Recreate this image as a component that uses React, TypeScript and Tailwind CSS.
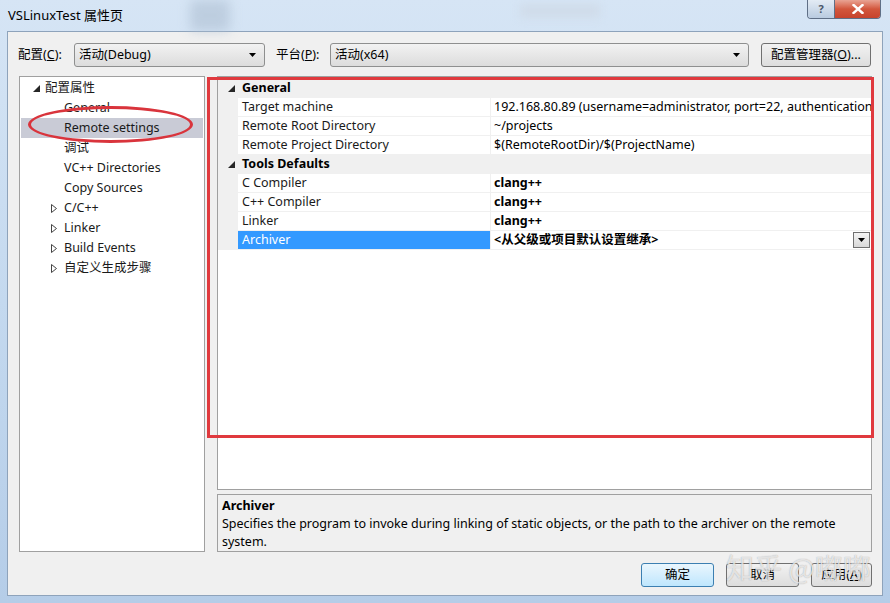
import React from "react";

const ui = { fontFamily: '"Noto Sans", "Noto Sans CJK SC", sans-serif' };

function Combo({ value, className }: { value: string; className: string }) {
  return (
    <div
      className={`flex h-[24px] shrink-0 items-center justify-between rounded-[3px] border border-[#8e8f8f] bg-gradient-to-b from-[#f2f2f2] to-[#dcdcdc] pl-[4px] pr-[8px] ${className}`}
    >
      <span className="text-[12.5px] text-black">{value}</span>
      <svg width="7" height="4" viewBox="0 0 7 4">
        <path d="M0 0h7L3.5 4z" fill="#000" />
      </svg>
    </div>
  );
}

function Btn({ label, primary, className }: { label: React.ReactNode; primary?: boolean; className: string }) {
  return (
    <div
      className={`flex h-[24px] shrink-0 items-center justify-center rounded-[3px] border bg-gradient-to-b text-[12.5px] text-black ${
        primary ? "border-[#3c7fb1] from-[#eaf6fd] to-[#bee6fd]" : "border-[#707070] from-[#f2f2f2] to-[#dddddd]"
      } ${className}`}
    >
      {label}
    </div>
  );
}

const tree: { label: string; indent: "child" | "expand" | "root"; selected?: boolean }[] = [
  { label: "配置属性", indent: "root" },
  { label: "General", indent: "child" },
  { label: "Remote settings", indent: "child", selected: true },
  { label: "调试", indent: "child" },
  { label: "VC++ Directories", indent: "child" },
  { label: "Copy Sources", indent: "child" },
  { label: "C/C++", indent: "expand" },
  { label: "Linker", indent: "expand" },
  { label: "Build Events", indent: "expand" },
  { label: "自定义生成步骤", indent: "expand" },
];

type Row =
  | { kind: "cat"; label: string }
  | { kind: "prop"; name: string; value: string; bold?: boolean; selected?: boolean };

const rows: Row[] = [
  { kind: "cat", label: "General" },
  { kind: "prop", name: "Target machine", value: "192.168.80.89 (username=administrator, port=22, authentication=Password)" },
  { kind: "prop", name: "Remote Root Directory", value: "~/projects" },
  { kind: "prop", name: "Remote Project Directory", value: "$(RemoteRootDir)/$(ProjectName)" },
  { kind: "cat", label: "Tools Defaults" },
  { kind: "prop", name: "C Compiler", value: "clang++", bold: true },
  { kind: "prop", name: "C++ Compiler", value: "clang++", bold: true },
  { kind: "prop", name: "Linker", value: "clang++", bold: true },
  { kind: "prop", name: "Archiver", value: "<从父级或项目默认设置继承>", bold: true, selected: true },
];

function CatTriangle() {
  return (
    <svg width="7" height="7" viewBox="0 0 7 7">
      <path d="M7 0V7H0z" fill="#262626" />
    </svg>
  );
}

function ExpandTriangle() {
  return (
    <svg width="6" height="9" viewBox="0 0 6 9">
      <path d="M0.5 0.5L5.5 4.5L0.5 8.5z" fill="none" stroke="#444" />
    </svg>
  );
}

export default function App() {
  return (
    <div
      className="relative flex h-[603px] w-[890px] flex-col overflow-hidden bg-gradient-to-b from-[#d6e5f5] via-[#c4d9ef] to-[#b5cde8]"
      style={ui}
    >
      {/* title bar */}
      <div className="relative h-[31px] shrink-0">
        <div className="absolute left-[190px] top-0 h-[31px] w-[40px] bg-[#aebfd2] opacity-60 blur-[6px]" />
        <div className="absolute left-[520px] top-[4px] h-[14px] w-[80px] bg-[#d0dcea] blur-[4px]" />
        <span className="absolute left-[8px] top-[6px] text-[13px] text-black">VSLinuxTest 属性页</span>
        <div className="absolute right-[9px] top-0 flex h-[19px] overflow-hidden rounded-b-[4px] border border-t-0 border-[#5f6f86]">
          <div className="flex w-[27px] items-center justify-center border-r border-[#5f6f86] bg-gradient-to-b from-[#e3ebf4] to-[#b9cbe0] text-[11px] font-bold text-[#4a5668]">
            ?
          </div>
          <div className="flex w-[45px] items-center justify-center bg-gradient-to-b from-[#e8a393] via-[#d2563c] to-[#c7432d]">
            <svg width="12" height="10" viewBox="0 0 12 10">
              <path d="M1.5 1L10.5 9M10.5 1L1.5 9" stroke="#fff" strokeWidth="2.4" strokeLinecap="square" />
            </svg>
          </div>
        </div>
      </div>

      {/* client area */}
      <div className="mx-[7px] mb-[7px] flex flex-1 flex-col border border-[#8ea3bb] bg-[#f0f0f0] px-[10px] pt-[11px]">
        <div className="flex h-[24px] items-center">
          <span className="w-[56px] shrink-0 text-[12.5px] text-black">
            配置(<u>C</u>):
          </span>
          <Combo value="活动(Debug)" className="w-[191px]" />
          <span className="ml-[11px] w-[54px] shrink-0 text-[12.5px] text-black">
            平台(<u>P</u>):
          </span>
          <Combo value="活动(x64)" className="w-[419px]" />
          <Btn label={<span>配置管理器(<u>O</u>)...</span>} className="ml-[12px] w-[110px]" />
        </div>

        <div className="mt-[9px] flex h-[476px] gap-[12px] pl-[1px]">
          {/* tree */}
          <div className="flex w-[186px] shrink-0 flex-col border border-[#a0a0a0] bg-white pt-[1px]">
            {tree.map((t) => (
              <div
                key={t.label}
                className={`mx-[1px] flex h-[20px] shrink-0 items-center whitespace-nowrap text-[12.5px] text-[#1a1a1a] ${
                  t.selected ? "bg-[#c9cbd6]" : ""
                }`}
              >
                {t.indent === "root" && (
                  <>
                    <span className="ml-[12px] w-[12px]">
                      <CatTriangle />
                    </span>
                    <span>{t.label}</span>
                  </>
                )}
                {t.indent === "expand" && (
                  <>
                    <span className="ml-[30px] w-[13px]">
                      <ExpandTriangle />
                    </span>
                    <span>{t.label}</span>
                  </>
                )}
                {t.indent === "child" && <span className="ml-[43px]">{t.label}</span>}
              </div>
            ))}
          </div>

          {/* right column */}
          <div className="flex min-w-0 flex-1 flex-col gap-[4px]">
            <div className="min-h-0 flex-1 overflow-hidden border border-[#a0a0a0] bg-white pt-[2px]">
              {rows.map((r, i) =>
                r.kind === "cat" ? (
                  <div key={i} className="flex h-[19px] items-center bg-[#f0f0f0] text-[12.5px] font-bold text-black">
                    <span className="ml-[10px] w-[14px]">
                      <CatTriangle />
                    </span>
                    {r.label}
                  </div>
                ) : (
                  <div key={i} className="flex h-[19px] bg-[#f0f0f0]">
                    <div className="w-[20px] shrink-0" />
                    <div
                      className={`flex w-[252px] shrink-0 items-center border-b border-[#f0f0f0] pl-[4px] text-[12.5px] ${
                        r.selected ? "bg-[#3399ff] text-white" : "bg-white text-[#1a1a1a]"
                      }`}
                    >
                      {r.name}
                    </div>
                    <div
                      className={`flex min-w-0 flex-1 items-center justify-between overflow-hidden border-b border-l border-[#f0f0f0] bg-white pl-[3px] text-[12.5px] text-black ${
                        r.bold ? "font-bold" : ""
                      }`}
                    >
                      <span className="whitespace-nowrap">{r.value}</span>
                      {r.selected && (
                        <div className="mr-[1px] flex h-[16px] w-[17px] shrink-0 items-center justify-center border border-[#707070] bg-gradient-to-b from-[#f4f4f4] to-[#d8d8d8]">
                          <svg width="7" height="4" viewBox="0 0 7 4">
                            <path d="M0 0h7L3.5 4z" fill="#000" />
                          </svg>
                        </div>
                      )}
                    </div>
                  </div>
                )
              )}
            </div>
            <div className="h-[58px] shrink-0 border border-[#a0a0a0] bg-[#f0f0f0] px-[4px] pt-[2px] text-[12.5px] leading-[18px] text-black">
              <div className="font-bold">Archiver</div>
              <div>
                Specifies the program to invoke during linking of static objects, or the path to the archiver on the remote
                system.
              </div>
            </div>
          </div>
        </div>

        <div className="mt-[11px] flex justify-end gap-[12px]">
          <Btn label="确定" primary className="w-[73px]" />
          <Btn label="取消" className="w-[73px]" />
          <Btn label={<span>应用(<u>A</u>)</span>} className="w-[61px]" />
        </div>
      </div>

      {/* annotations */}
      <div className="pointer-events-none absolute left-[207px] top-[77px] h-[361px] w-[667px] border-[3px] border-[#e0393e]" />
      <div className="pointer-events-none absolute left-[28px] top-[106px] h-[37px] w-[165px] rounded-[50%] border-[3px] border-[#d9343c]" />

      {/* watermark */}
      <div
        className="pointer-events-none absolute left-[726px] top-[546px] text-[28px] text-white/70"
        style={{ fontFamily: '"Noto Sans CJK SC", sans-serif', textShadow: "0 0 1px rgba(80,80,80,0.5)" }}
      >
        知乎 @嘟嘟
      </div>
    </div>
  );
}
